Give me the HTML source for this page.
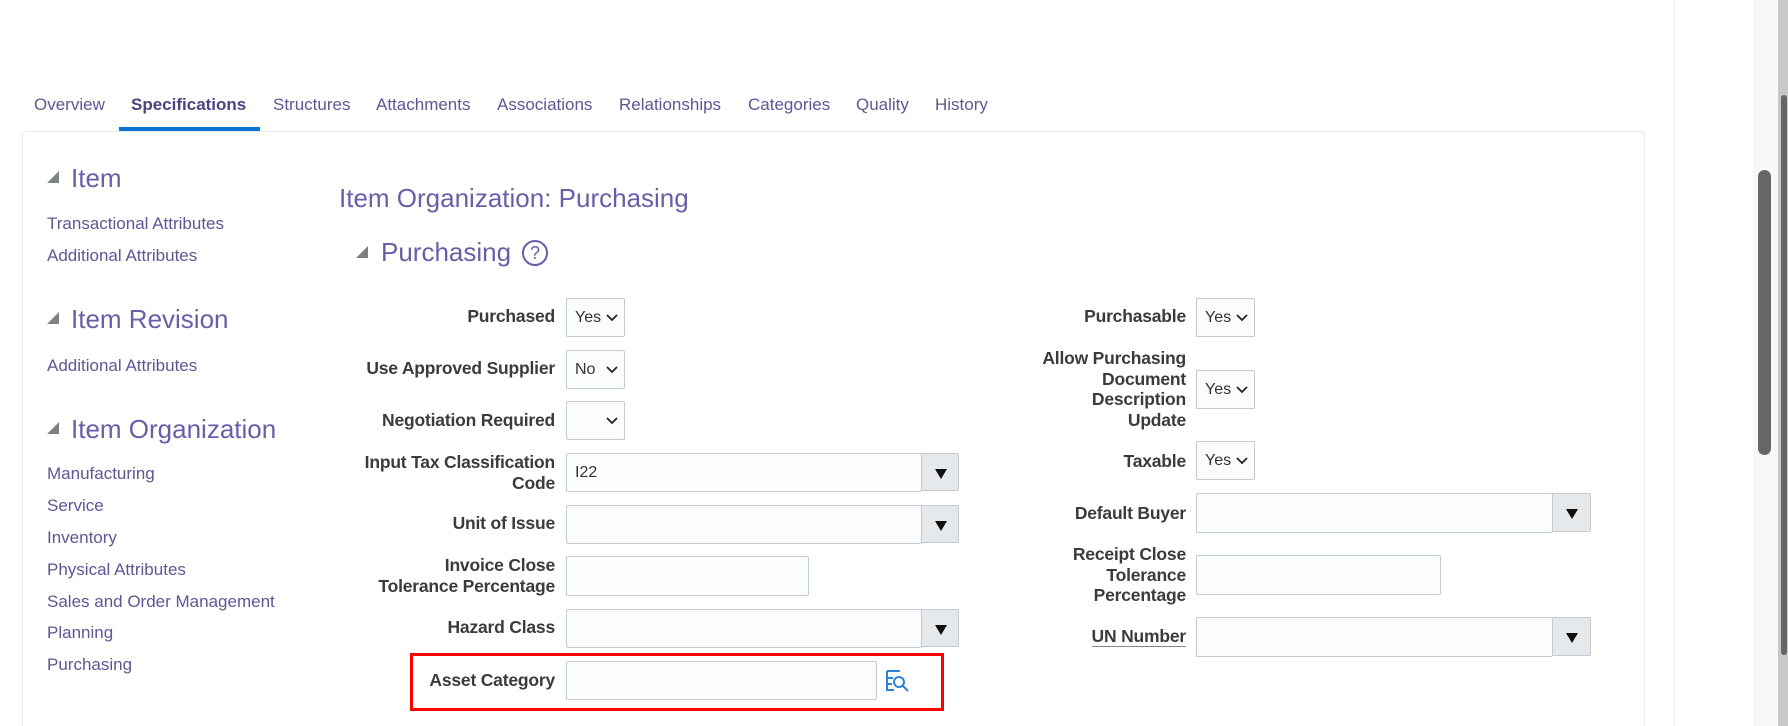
<!DOCTYPE html>
<html style="overflow:hidden;height:726px"><head><meta charset="utf-8"><style>
*{margin:0;padding:0;box-sizing:border-box}
body{width:1788px;height:726px;background:#fff;position:relative;overflow:hidden;font-family:"Liberation Sans",Arial,sans-serif}
.a{position:absolute;white-space:nowrap}
.tab{font-size:17px;color:#5f5694;top:95px}
.lnk{font-size:17px;color:#5f5694;left:47px}
.h{font-size:26px;color:#6a5ea6}
.tri{position:absolute;width:0;height:0;border-left:12px solid transparent;border-bottom:12px solid #7d8185}
.lbl{font-size:17.5px;font-weight:bold;color:#3b3b3b;text-align:right;line-height:20.5px;letter-spacing:-0.2px}
.box{position:absolute;border:1px solid #c3cad2;border-radius:2px;background:#fbfcfd;font-size:16px;color:#333}
.btn{position:absolute;border:1px solid #c3cad2;border-radius:0 2px 2px 0;background:#e6e9ec}
.btn:after{content:"";position:absolute;left:13px;top:15px;border-left:6px solid transparent;border-right:6px solid transparent;border-top:10px solid #111}
.sel span{position:absolute;left:8px;top:10px}
.sel svg{position:absolute;right:6px;top:15px}
</style></head><body>

<div class="a tab" style="left:34px">Overview</div>
<div class="a tab" style="left:131px;font-weight:bold;color:#4c4380">Specifications</div>
<div class="a tab" style="left:273px">Structures</div>
<div class="a tab" style="left:376px">Attachments</div>
<div class="a tab" style="left:497px">Associations</div>
<div class="a tab" style="left:619px">Relationships</div>
<div class="a tab" style="left:748px">Categories</div>
<div class="a tab" style="left:856px">Quality</div>
<div class="a tab" style="left:935px">History</div>
<div class="a" style="left:119px;top:127px;width:141px;height:4px;background:#0a72d1"></div>

<div class="a" style="left:22px;top:131px;width:1623px;height:600px;border:1px solid #e6ebef;border-bottom:none;border-radius:3px 3px 0 0"></div>
<div class="a" style="left:1674px;top:0;width:1px;height:726px;background:#e6ebef"></div>
<div class="a" style="left:1753px;top:0;width:25px;height:726px;background:#f8f8f8"></div>
<div class="a" style="left:1758px;top:170px;width:13px;height:285px;background:#666;border-radius:7px"></div>
<div class="a" style="left:1778px;top:0;width:10px;height:726px;background:#c8c8c8"></div>
<div class="a" style="left:1781px;top:95px;width:6px;height:560px;background:#666;border-radius:3px"></div>

<!-- left nav -->
<div class="tri" style="left:47px;top:171px"></div>
<div class="a h" style="left:71px;top:163px">Item</div>
<div class="a lnk" style="top:214px">Transactional Attributes</div>
<div class="a lnk" style="top:246px">Additional Attributes</div>
<div class="tri" style="left:47px;top:312px"></div>
<div class="a h" style="left:71px;top:304px">Item Revision</div>
<div class="a lnk" style="top:356px">Additional Attributes</div>
<div class="tri" style="left:47px;top:422px"></div>
<div class="a h" style="left:71px;top:414px">Item Organization</div>
<div class="a lnk" style="top:464px">Manufacturing</div>
<div class="a lnk" style="top:496px">Service</div>
<div class="a lnk" style="top:528px">Inventory</div>
<div class="a lnk" style="top:560px">Physical Attributes</div>
<div class="a lnk" style="top:592px">Sales and Order Management</div>
<div class="a lnk" style="top:623px">Planning</div>
<div class="a lnk" style="top:655px">Purchasing</div>

<!-- main -->
<div class="a" style="left:339px;top:183px;font-size:26px;color:#6a5ea6">Item Organization: Purchasing</div>
<div class="tri" style="left:356px;top:246px"></div>
<div class="a h" style="left:381px;top:237px">Purchasing</div>
<div class="a" style="left:522px;top:240px;width:26px;height:26px;border:2px solid #6a5ea6;border-radius:50%;color:#6a5ea6;font-size:18px;text-align:center;line-height:22px">?</div>

<!-- left column labels (right edge 555) -->
<div class="a lbl" style="right:1233px;top:306px">Purchased</div>
<div class="a lbl" style="right:1233px;top:358px">Use Approved Supplier</div>
<div class="a lbl" style="right:1233px;top:410px">Negotiation Required</div>
<div class="a lbl" style="right:1233px;top:452px">Input Tax Classification<br>Code</div>
<div class="a lbl" style="right:1233px;top:513px">Unit of Issue</div>
<div class="a lbl" style="right:1233px;top:555px">Invoice Close<br>Tolerance Percentage</div>
<div class="a lbl" style="right:1233px;top:617px">Hazard Class</div>
<div class="a lbl" style="right:1233px;top:670px">Asset Category</div>

<div class="box sel" style="left:566px;top:298px;width:59px;height:39px"><span>Yes</span><svg width="12" height="8"><path d="M1 1l5 5 5-5" fill="none" stroke="#222" stroke-width="1.8"/></svg></div>
<div class="box sel" style="left:566px;top:350px;width:59px;height:39px"><span>No</span><svg width="12" height="8"><path d="M1 1l5 5 5-5" fill="none" stroke="#222" stroke-width="1.8"/></svg></div>
<div class="box sel" style="left:566px;top:401px;width:59px;height:39px"><svg width="12" height="8"><path d="M1 1l5 5 5-5" fill="none" stroke="#222" stroke-width="1.8"/></svg></div>
<div class="box sel" style="left:566px;top:453px;width:356px;height:39px"><span>I22</span></div>
<div class="btn" style="left:921px;top:453px;width:38px;height:38px"></div>
<div class="box" style="left:566px;top:505px;width:356px;height:39px"></div>
<div class="btn" style="left:921px;top:505px;width:38px;height:38px"></div>
<div class="box" style="left:566px;top:556px;width:243px;height:40px"></div>
<div class="box" style="left:566px;top:609px;width:356px;height:39px"></div>
<div class="btn" style="left:921px;top:609px;width:38px;height:38px"></div>
<div class="box" style="left:566px;top:661px;width:311px;height:39px"></div>
<svg class="a" style="left:886px;top:669px" width="24" height="23" viewBox="0 0 24 23" fill="none" stroke="#2f83d6" stroke-width="2"><path d="M1 2h13M1 2v19h7M1 9h6M1 15h5M4 21h4"/><circle cx="13" cy="13" r="5"/><path d="M17 17l5 5"/></svg>
<div class="a" style="left:410px;top:653px;width:534px;height:58px;border:3px solid #f00"></div>

<!-- right column labels (right edge 1186) -->
<div class="a lbl" style="right:602px;top:306px">Purchasable</div>
<div class="a lbl" style="right:602px;top:348px">Allow Purchasing<br>Document<br>Description<br>Update</div>
<div class="a lbl" style="right:602px;top:451px">Taxable</div>
<div class="a lbl" style="right:602px;top:503px">Default Buyer</div>
<div class="a lbl" style="right:602px;top:544px">Receipt Close<br>Tolerance<br>Percentage</div>
<div class="a lbl" style="right:602px;top:626px;border-bottom:1px solid #888;line-height:20px">UN Number</div>

<div class="box sel" style="left:1196px;top:298px;width:59px;height:39px"><span>Yes</span><svg width="12" height="8"><path d="M1 1l5 5 5-5" fill="none" stroke="#222" stroke-width="1.8"/></svg></div>
<div class="box sel" style="left:1196px;top:370px;width:59px;height:39px"><span>Yes</span><svg width="12" height="8"><path d="M1 1l5 5 5-5" fill="none" stroke="#222" stroke-width="1.8"/></svg></div>
<div class="box sel" style="left:1196px;top:441px;width:59px;height:39px"><span>Yes</span><svg width="12" height="8"><path d="M1 1l5 5 5-5" fill="none" stroke="#222" stroke-width="1.8"/></svg></div>
<div class="box" style="left:1196px;top:493px;width:357px;height:40px"></div>
<div class="btn" style="left:1552px;top:493px;width:39px;height:39px"></div>
<div class="box" style="left:1196px;top:555px;width:245px;height:40px"></div>
<div class="box" style="left:1196px;top:617px;width:357px;height:40px"></div>
<div class="btn" style="left:1552px;top:617px;width:39px;height:39px"></div>

</body></html>
